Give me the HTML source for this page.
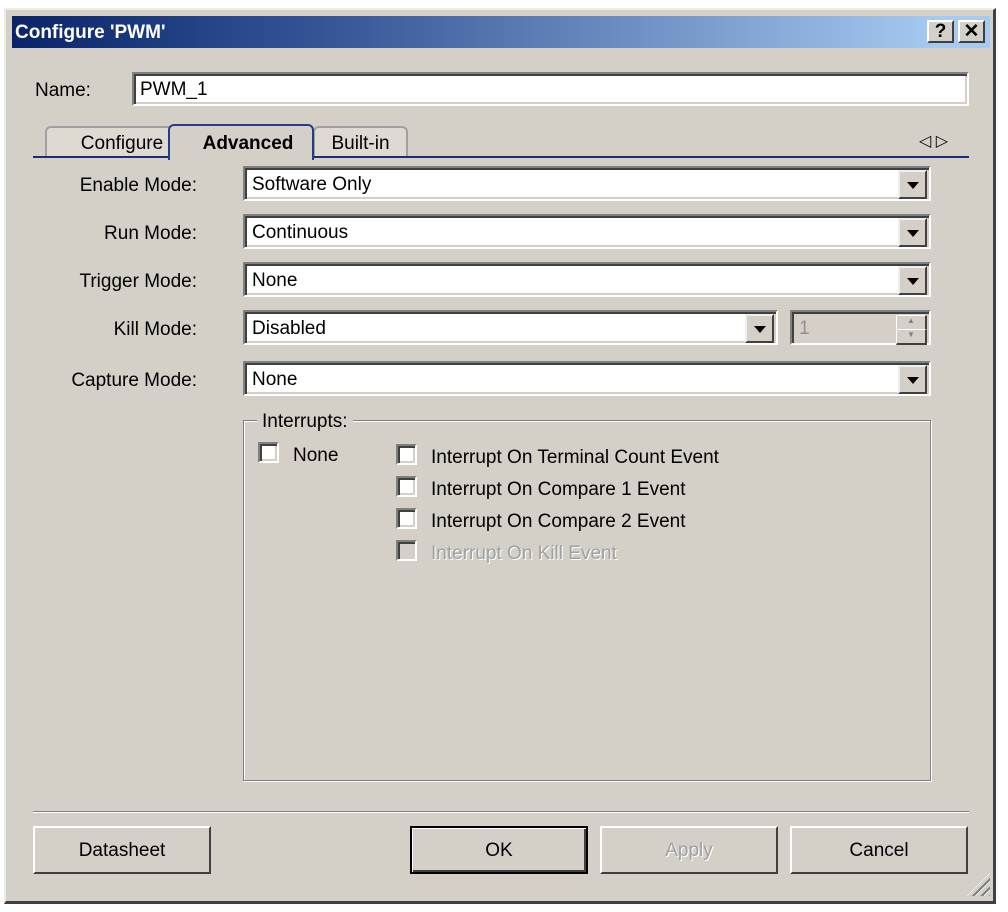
<!DOCTYPE html>
<html><head><style>
body{margin:0;width:1008px;height:912px;background:#fff;position:relative;overflow:hidden;font-family:"Liberation Sans",sans-serif;font-size:19px;color:#000}
.a{position:absolute}
.win{left:4px;top:8px;width:992px;height:896px;background:#d4d0c8;border-top:2px solid #eeece8;border-left:2px solid #eeece8;border-right:3px solid #404040;border-bottom:3px solid #404040;box-sizing:border-box}
.title{left:12px;top:16px;width:978px;height:32px;background:linear-gradient(90deg,#0a246a,#3a5a9a 35%,#a6caf0 95%)}
.tb{width:27px;height:23px;top:20px;background:#d4d0c8;border-top:2px solid #fff;border-left:2px solid #fff;border-right:2px solid #404040;border-bottom:2px solid #404040;box-sizing:border-box;font-weight:bold;text-align:center;line-height:19px;font-size:19px}
.sunk{background:#fff;border-top:2px solid #808080;border-left:2px solid #808080;border-right:2px solid #fff;border-bottom:2px solid #fff;box-sizing:border-box;box-shadow:inset 2px 2px 0 #404040,inset -2px -2px 0 #d4d0c8}
.lbl{text-align:right;width:200px;left:0}
.dd{width:29px;height:29px;background:#d4d0c8;border-top:2px solid #eee;border-left:2px solid #eee;border-right:2px solid #404040;border-bottom:2px solid #404040;box-sizing:border-box}
.dd:after{content:"";position:absolute;left:7px;top:10px;border-left:6px solid transparent;border-right:6px solid transparent;border-top:7px solid #000}
.cb{width:21px;height:21px}
.btn{top:826px;width:178px;height:48px;background:#d4d0c8;border-top:2px solid #fff;border-left:2px solid #fff;border-right:2px solid #404040;border-bottom:2px solid #404040;box-sizing:border-box;text-align:center;line-height:46px}
.tab{top:126px;height:32px;border:2px solid #a0a0a0;border-bottom:none;border-radius:6px 6px 0 0;box-sizing:border-box;text-align:center;line-height:32px;background:#dedad2}
</style></head><body>
<div class="a win"></div>
<div class="a title"></div>
<div class="a" style="left:15px;top:22px;color:#fff;font-weight:bold;font-size:19px">Configure 'PWM'</div>
<div class="a tb" style="left:927px">?</div>
<div class="a tb" style="left:958px">✕</div>
<div class="a" style="left:35px;top:80px">Name:</div>
<div class="a sunk" style="left:132px;top:72px;width:837px;height:34px;padding:5px 6px">PWM_1</div>

<div class="a tab" style="left:45px;width:134px;padding-left:20px">Configure</div>
<div class="a tab" style="left:313px;width:95px">Built-in</div>
<div class="a tab" style="left:168px;top:124px;width:146px;height:36px;background:#d4d0c8;border-color:#243c8c;font-weight:bold;padding-left:14px;line-height:36px;z-index:2">Advanced</div>
<div class="a" style="left:33px;top:156px;width:936px;height:2px;background:#1c2f72"></div>
<div class="a" style="left:919px;top:131px;font-size:16px">◁ ▷</div>

<div class="a lbl" style="top:175px;width:197px">Enable Mode:</div>
<div class="a sunk" style="left:243px;top:166px;width:688px;height:35px;padding:6px 7px">Software Only<div class="a dd" style="right:2px;top:2px"></div></div>
<div class="a lbl" style="top:223px;width:197px">Run Mode:</div>
<div class="a sunk" style="left:243px;top:214px;width:688px;height:35px;padding:6px 7px">Continuous<div class="a dd" style="right:2px;top:2px"></div></div>
<div class="a lbl" style="top:271px;width:197px">Trigger Mode:</div>
<div class="a sunk" style="left:243px;top:262px;width:688px;height:35px;padding:6px 7px">None<div class="a dd" style="right:2px;top:2px"></div></div>
<div class="a lbl" style="top:319px;width:197px">Kill Mode:</div>
<div class="a sunk" style="left:243px;top:310px;width:535px;height:35px;padding:6px 7px">Disabled<div class="a dd" style="right:2px;top:2px"></div></div>
<div class="a sunk" style="left:790px;top:310px;width:141px;height:35px;padding:6px 7px;background:#d4d0c8;color:#909090">1
<div class="a" style="right:2px;top:3px;width:28px;height:13px;border-top:1px solid #fff;border-left:1px solid #fff;border-right:2px solid #404040;border-bottom:1px solid #404040;font-size:8px;line-height:10px;text-align:center;color:#808080">▲</div>
<div class="a" style="right:2px;top:17px;width:28px;height:13px;border-top:1px solid #fff;border-left:1px solid #fff;border-right:2px solid #404040;border-bottom:2px solid #404040;font-size:8px;line-height:10px;text-align:center;color:#808080">▼</div></div>
<div class="a lbl" style="top:370px;width:197px">Capture Mode:</div>
<div class="a sunk" style="left:243px;top:361px;width:688px;height:35px;padding:6px 7px">None<div class="a dd" style="right:2px;top:2px"></div></div>

<div class="a" style="left:243px;top:420px;width:688px;height:361px;border:1px solid #808080;box-shadow:1px 1px 0 #fff,inset 1px 1px 0 #fff;box-sizing:border-box"></div>
<div class="a" style="left:257px;top:411px;background:#d4d0c8;padding:0 5px">Interrupts:</div>
<div class="a sunk cb" style="left:258px;top:442px"></div><div class="a" style="left:293px;top:445px">None</div>
<div class="a sunk cb" style="left:396px;top:444px"></div><div class="a" style="left:431px;top:447px">Interrupt On Terminal Count Event</div>
<div class="a sunk cb" style="left:396px;top:476px"></div><div class="a" style="left:431px;top:479px">Interrupt On Compare 1 Event</div>
<div class="a sunk cb" style="left:396px;top:508px"></div><div class="a" style="left:431px;top:511px">Interrupt On Compare 2 Event</div>
<div class="a sunk cb" style="left:396px;top:540px;background:#d4d0c8"></div><div class="a" style="left:431px;top:543px;color:#a0a0a0;text-shadow:1px 1px 0 #fff">Interrupt On Kill Event</div>

<div class="a" style="left:33px;top:811px;width:936px;height:1px;background:#808080;border-bottom:1px solid #fff"></div>
<div class="a btn" style="left:33px">Datasheet</div>
<div class="a btn" style="left:410px;border:2px solid #000;box-shadow:inset 1px 1px 0 #fff,inset -2px -2px 0 #404040">OK</div>
<div class="a btn" style="left:600px;color:#a0a0a0;text-shadow:1px 1px 0 #fff">Apply</div>
<div class="a btn" style="left:790px">Cancel</div>
<div class="a" style="left:966px;top:872px;width:24px;height:24px;background:repeating-linear-gradient(135deg,transparent 0 3px,#808080 3px 5px,#fff 5px 6px);clip-path:polygon(100% 0,100% 100%,0 100%)"></div>
</body></html>
